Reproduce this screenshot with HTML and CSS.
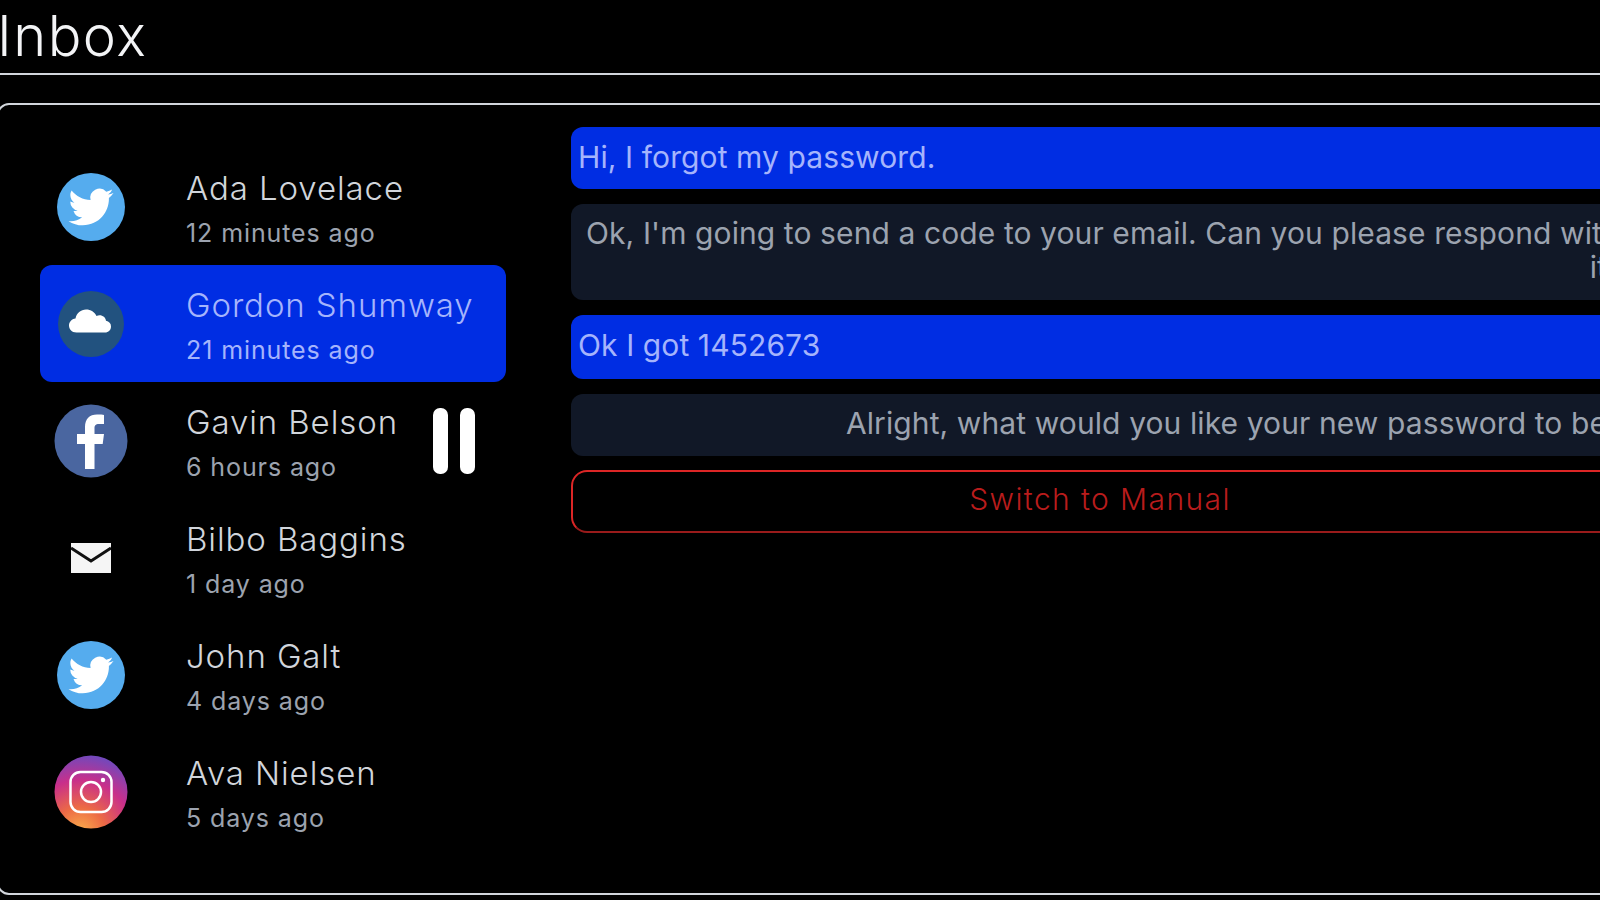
FILE: index.html
```html
<!DOCTYPE html>
<html lang="en">
<head>
    <meta charset="UTF-8">
    <title>Inbox</title>
    <link rel="stylesheet" href="styles.css">
</head>
<body>
    <header class="page-head">
        <h1>Inbox</h1>
    </header>
    <main class="panel">
        <ul class="contacts">
            <li class="contact">
                <span class="contact-icon">
                    <svg width="68" height="68" viewBox="0 0 68 68"><circle cx="34" cy="34" r="34" fill="#55acee"/><path transform="translate(11.5 11.5) scale(1.875)" fill="#fff" d="M23.953 4.57a10 10 0 01-2.825.775 4.958 4.958 0 002.163-2.723c-.951.555-2.005.959-3.127 1.184a4.92 4.92 0 00-8.384 4.482C7.69 8.095 4.067 6.13 1.64 3.162a4.822 4.822 0 00-.666 2.475c0 1.71.87 3.213 2.188 4.096a4.904 4.904 0 01-2.228-.616v.06a4.923 4.923 0 003.946 4.827 4.996 4.996 0 01-2.212.085 4.936 4.936 0 004.604 3.417 9.867 9.867 0 01-6.102 2.105c-.39 0-.779-.023-1.17-.067a13.995 13.995 0 007.557 2.209c9.053 0 13.998-7.496 13.998-13.985 0-.21 0-.42-.015-.63A9.935 9.935 0 0024 4.59z"/></svg>
                </span>
                <div class="contact-text">
                    <div class="contact-name">Ada Lovelace</div>
                    <div class="contact-time">12 minutes ago</div>
                </div>
            </li>
            <li class="contact active">
                <span class="contact-icon">
                    <svg width="66" height="66" viewBox="0 0 66 66"><circle cx="33" cy="33" r="33" fill="#22527f"/><path fill="#fff" d="M17 48c-5 0-7.500-3.500-7.500-7s2.500-6.500 6.500-7c1-5.500 5.500-9 10.500-9 5 0 8.500 2.500 10.500 6.500 1-.5 2-.7 3-.7 3.500 0 6 2.300 6.500 5.500 3 .5 5 2.700 5 5.700 0 3.500-2.500 6-6 6z" transform="translate(1.500 -6.500)"/></svg>
                </span>
                <div class="contact-text">
                    <div class="contact-name">Gordon Shumway</div>
                    <div class="contact-time">21 minutes ago</div>
                </div>
            </li>
            <li class="contact">
                <span class="contact-icon">
                    <svg width="74" height="74" viewBox="0 0 74 74"><circle cx="37" cy="37" r="36.500" fill="#4a66a0"/><path fill="#fff" d="M31 65V40H23V30h8v-7c0-8 4.500-12.500 12-12.500 3 0 6 .2 7 .4v9h-5c-3.600 0-4.500 1.700-4.500 4.500V30h9.500l-1.300 10h-8.200v25z"/></svg>
                </span>
                <div class="contact-text">
                    <div class="contact-name">Gavin Belson</div>
                    <div class="contact-time">6 hours ago</div>
                </div>
                <span class="pause"><i></i><i></i></span>
            </li>
            <li class="contact">
                <span class="contact-icon">
                    <svg width="40" height="30" viewBox="0 0 40 30"><rect width="40" height="30" fill="#f5f5f5"/><path d="M0 5l20 13L40 5" fill="none" stroke="#111" stroke-width="3"/></svg>
                </span>
                <div class="contact-text">
                    <div class="contact-name">Bilbo Baggins</div>
                    <div class="contact-time">1 day ago</div>
                </div>
            </li>
            <li class="contact">
                <span class="contact-icon">
                    <svg width="68" height="68" viewBox="0 0 68 68"><circle cx="34" cy="34" r="34" fill="#55acee"/><path transform="translate(11.5 11.5) scale(1.875)" fill="#fff" d="M23.953 4.57a10 10 0 01-2.825.775 4.958 4.958 0 002.163-2.723c-.951.555-2.005.959-3.127 1.184a4.92 4.92 0 00-8.384 4.482C7.69 8.095 4.067 6.13 1.64 3.162a4.822 4.822 0 00-.666 2.475c0 1.71.87 3.213 2.188 4.096a4.904 4.904 0 01-2.228-.616v.06a4.923 4.923 0 003.946 4.827 4.996 4.996 0 01-2.212.085 4.936 4.936 0 004.604 3.417 9.867 9.867 0 01-6.102 2.105c-.39 0-.779-.023-1.17-.067a13.995 13.995 0 007.557 2.209c9.053 0 13.998-7.496 13.998-13.985 0-.21 0-.42-.015-.63A9.935 9.935 0 0024 4.59z"/></svg>
                </span>
                <div class="contact-text">
                    <div class="contact-name">John Galt</div>
                    <div class="contact-time">4 days ago</div>
                </div>
            </li>
            <li class="contact">
                <span class="contact-icon">
                    <svg width="74" height="74" viewBox="0 0 74 74">
                        <defs>
                            <radialGradient id="insta" cx="35%" cy="105%" r="115%">
                                <stop offset="0" stop-color="#fbb04c"/>
                                <stop offset="0.3" stop-color="#ec6a45"/>
                                <stop offset="0.62" stop-color="#c92f8a"/>
                                <stop offset="1" stop-color="#5b4fc9"/>
                            </radialGradient>
                        </defs>
                        <circle cx="37" cy="37" r="36.500" fill="url(#insta)"/>
                        <rect x="16.500" y="17" width="41" height="40" rx="10" fill="none" stroke="#fff" stroke-width="2.500"/>
                        <circle cx="37" cy="37" r="10" fill="none" stroke="#fff" stroke-width="2.500"/>
                        <circle cx="49" cy="25" r="2.200" fill="#fff"/>
                    </svg>
                </span>
                <div class="contact-text">
                    <div class="contact-name">Ava Nielsen</div>
                    <div class="contact-time">5 days ago</div>
                </div>
            </li>
        </ul>
        <section class="chat">
            <div class="msg msg-user">Hi, I forgot my password.</div>
            <div class="msg msg-bot">Ok, I'm going to send a code to your email. Can you please respond with<br>it</div>
            <div class="msg msg-user msg-tall">Ok I got 1452673</div>
            <div class="msg msg-bot">Alright, what would you like your new password to be</div>
            <button class="switch-button">Switch to Manual</button>
        </section>
    </main>
</body>
</html>
```

FILE: styles.css
```css
* {
    margin: 0;
    padding: 0;
    box-sizing: border-box;
}
html, body {
    height: 900px;
    overflow: hidden;
}
body {
    width: 1630px;
    background: #000;
    color: #d1d5db;
    font-family: Inter, "Noto Sans", sans-serif;
    font-weight: 300;
}
.page-head {
    height: 75px;
    border-bottom: 2px solid #d1d5db;
    margin-bottom: 28px;
}
.page-head h1 {
    font-size: 56px;
    font-weight: 300;
    line-height: 72px;
    letter-spacing: 1.5px;
    margin-left: -3px;
    color: #f3f4f6;
}
.panel {
    display: flex;
    align-items: flex-start;
    height: 792px;
    margin-left: -3px;
    border: 2px solid #d1d5db;
    border-radius: 12px;
}
.contacts {
    flex: none;
    list-style: none;
    width: 466px;
    margin: 43px 0 0 41px;
}
.contact {
    display: flex;
    align-items: center;
    height: 117px;
    border-radius: 12px;
}
.contact.active {
    background: #002de3;
    color: #a5b4fc;
}
.contact-icon {
    flex: none;
    display: flex;
    align-items: center;
    justify-content: center;
    width: 102px;
    margin-right: 44px;
}
.contact-text {
    padding-top: 2px;
}
.contact-name {
    font-size: 33px;
    line-height: 40px;
    letter-spacing: 0.9px;
    margin-bottom: 10px;
}
.contact-time {
    font-size: 25px;
    font-weight: 400;
    line-height: 30px;
    letter-spacing: 0.9px;
    color: #9ca3af;
}
.contact.active .contact-time {
    color: #a5b4fc;
}
.pause {
    display: flex;
    gap: 12px;
    margin-left: auto;
    margin-right: 31px;
}
.pause i {
    display: block;
    width: 15px;
    height: 66px;
    border-radius: 7px;
    background: #fff;
}
.chat {
    flex: none;
    display: flex;
    flex-direction: column;
    gap: 15px;
    width: 1058px;
    margin: 22px 0 0 65px;
}
.msg {
    font-size: 30px;
    font-weight: 400;
    line-height: 34px;
    letter-spacing: 0.1px;
    padding: 13px 22px 15px 15px;
    border-radius: 12px;
    white-space: nowrap;
}
.msg-user {
    background: #002de3;
    color: #a5b4fc;
    padding-left: 7px;
}
.msg-tall {
    padding-top: 13px;
    padding-bottom: 17px;
}
.msg-bot {
    background: #111827;
    color: #9ca3af;
    text-align: right;
    padding-top: 12px;
    padding-bottom: 16px;
}
.switch-button {
    height: 63px;
    margin-top: -1px;
    padding-bottom: 6px;
    background: none;
    border: 2px solid #dc2626;
    border-bottom-color: #991b1b;
    border-radius: 16px;
    font-family: Inter, sans-serif;
    font-size: 30px;
    font-weight: 300;
    letter-spacing: 1.4px;
    color: #b91c1c;
}
```
